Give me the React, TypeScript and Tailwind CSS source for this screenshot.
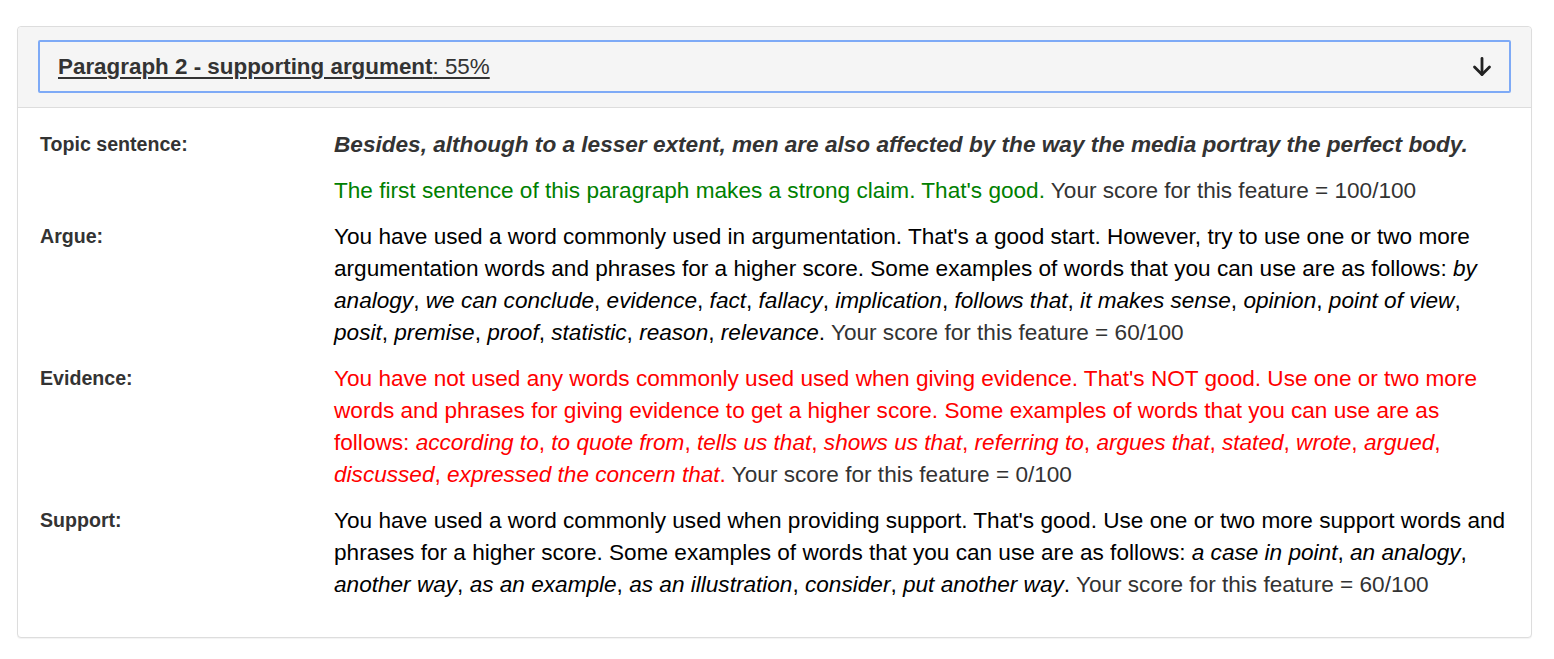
import React from 'react'

const FONT = { fontFamily: '"Liberation Sans", Arial, sans-serif' }

function Score({ value }: { value: string }) {
  return <span className="text-[#333333]"> Your score for this feature = {value}</span>
}

function Row({ label, children }: { label: string; children: React.ReactNode }) {
  return (
    <div className="flex mb-[14px]">
      <div className="w-[294px] shrink-0 text-[19.6px] leading-[30px] font-bold text-[#333333]">{label}</div>
      <div className="flex-1 text-[22.6px] leading-[32px]">{children}</div>
    </div>
  )
}

export default function App() {
  return (
    <div className="bg-white min-h-[659px] pt-[26px] pl-[17px]" style={FONT}>
      <div className="w-[1515px] border border-[#dddddd] rounded-[4px] bg-white shadow-[0_1px_1px_rgba(0,0,0,0.05)]">
        <div className="bg-[#f5f5f5] border-b border-[#dddddd] rounded-t-[4px] px-[20px] pt-[13px] pb-[14px]">
          <button
            type="button"
            className="w-full flex items-center justify-between border-2 border-[#7eaaf6] rounded-[2px] h-[53px] pl-[18px] pr-[16px] text-left"
          >
            <span className="text-[22.4px] text-[#333333] underline underline-offset-[3px] decoration-[1.5px]">
              <span className="font-bold">Paragraph 2 - supporting argument</span>: 55%
            </span>
            <svg width="22" height="22" viewBox="0 0 22 22" fill="none" stroke="#222222" strokeWidth="2.8" strokeLinecap="round" strokeLinejoin="round">
              <path d="M11 2.5v16" />
              <path d="M3.5 11 11 18.5l7.5-7.5" />
            </svg>
          </button>
        </div>

        <div className="pl-[22px] pr-[20px] pt-[21px] pb-[22px]">
          <Row label="Topic sentence:">
            <p className="font-bold italic text-[#333333] mb-[14px]">
              Besides, although to a lesser extent, men are also affected by the way the media portray the perfect body.
            </p>
            <p className="text-[#008000]">
              The first sentence of this paragraph makes a strong claim. That's good.
              <Score value="100/100" />
            </p>
          </Row>

          <Row label="Argue:">
            <p className="text-black">
              You have used a word commonly used in argumentation. That's a good start. However, try to use one or two more argumentation words and phrases for a higher score. Some examples of words that you can use are as follows:{' '}
              <i>by analogy</i>, <i>we can conclude</i>, <i>evidence</i>, <i>fact</i>, <i>fallacy</i>, <i>implication</i>, <i>follows that</i>, <i>it makes sense</i>, <i>opinion</i>, <i>point of view</i>, <i>posit</i>, <i>premise</i>, <i>proof</i>, <i>statistic</i>, <i>reason</i>, <i>relevance</i>.
              <Score value="60/100" />
            </p>
          </Row>

          <Row label="Evidence:">
            <p className="text-[#ff0000]">
              You have not used any words commonly used used when giving evidence. That's NOT good. Use one or two more words and phrases for giving evidence to get a higher score. Some examples of words that you can use are as follows:{' '}
              <i>according to</i>, <i>to quote from</i>, <i>tells us that</i>, <i>shows us that</i>, <i>referring to</i>, <i>argues that</i>, <i>stated</i>, <i>wrote</i>, <i>argued</i>, <i>discussed</i>, <i>expressed the concern that</i>.
              <Score value="0/100" />
            </p>
          </Row>

          <Row label="Support:">
            <p className="text-black">
              You have used a word commonly used when providing support. That's good. Use one or two more support words and phrases for a higher score. Some examples of words that you can use are as follows:{' '}
              <i>a case in point</i>, <i>an analogy</i>, <i>another way</i>, <i>as an example</i>, <i>as an illustration</i>, <i>consider</i>, <i>put another way</i>.
              <Score value="60/100" />
            </p>
          </Row>
        </div>
      </div>
    </div>
  )
}
